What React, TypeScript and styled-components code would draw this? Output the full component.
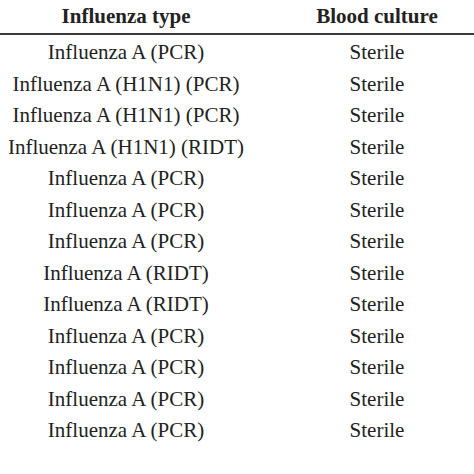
import { Fragment } from "react";
import styled, { createGlobalStyle } from "styled-components";

const GlobalStyle = createGlobalStyle`
  html, body {
    margin: 0;
    padding: 0;
    background: #ffffff;
  }
  body {
    font-family: "Liberation Serif", "DejaVu Serif", serif;
    color: #222222;
  }
`;

const Table = styled.div`
  width: 474px;
  display: grid;
  grid-template-columns: 252px 1fr;
  column-gap: 28px;
`;

const HeadCell = styled.div`
  height: 33px;
  display: flex;
  align-items: center;
  justify-content: center;
  font-size: 21px;
  font-weight: bold;
`;

const HeadRule = styled.div`
  grid-column: 1 / -1;
  height: 2px;
  background: #3a3a3a;
`;

const Cell = styled.div<{ $first?: boolean }>`
  height: 31.5px;
  display: flex;
  align-items: center;
  justify-content: center;
  font-size: 21px;
  white-space: nowrap;
  padding-top: ${(p) => (p.$first ? "2px" : "0")};
`;

const rows = [
  "Influenza A (PCR)",
  "Influenza A (H1N1) (PCR)",
  "Influenza A (H1N1) (PCR)",
  "Influenza A (H1N1) (RIDT)",
  "Influenza A (PCR)",
  "Influenza A (PCR)",
  "Influenza A (PCR)",
  "Influenza A (RIDT)",
  "Influenza A (RIDT)",
  "Influenza A (PCR)",
  "Influenza A (PCR)",
  "Influenza A (PCR)",
  "Influenza A (PCR)",
];

export default function App() {
  return (
    <>
      <GlobalStyle />
      <Table>
        <HeadCell>Influenza type</HeadCell>
        <HeadCell>Blood culture</HeadCell>
        <HeadRule />
        {rows.map((type, idx) => (
          <Fragment key={idx}>
            <Cell $first={idx === 0}>{type}</Cell>
            <Cell $first={idx === 0}>Sterile</Cell>
          </Fragment>
        ))}
      </Table>
    </>
  );
}
